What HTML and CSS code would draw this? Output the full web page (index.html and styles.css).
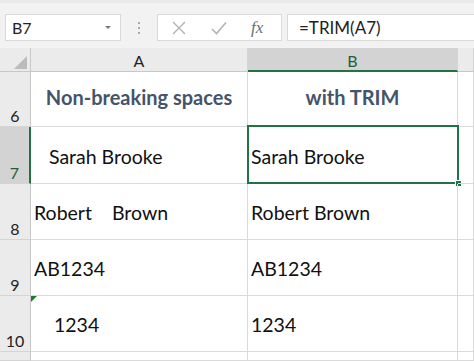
FILE: index.html
```html
<!DOCTYPE html>
<html lang="en">
<head>
    <meta charset="UTF-8">
    <title>TRIM non-breaking spaces</title>
    <link rel="stylesheet" href="styles.css">
</head>
<body>
    <div class="toolbar">
        <div class="name-box">
            <span>B7</span>
            <span class="caret"></span>
        </div>
        <div class="grip"><i></i><i></i><i></i></div>
        <div class="fx-buttons">
            <svg class="btn-icon" width="14" height="14" viewBox="0 0 14 14"><path d="M1 1 L13 13 M13 1 L1 13" stroke="#b3b3b3" stroke-width="1.4" fill="none"/></svg>
            <svg class="btn-icon" width="16" height="14" viewBox="0 0 16 14"><path d="M1 8 L5.5 12.5 L15 1.5" stroke="#b3b3b3" stroke-width="1.6" fill="none"/></svg>
            <span class="fx">fx</span>
        </div>
        <div class="formula">=TRIM(A7)</div>
    </div>

    <div class="sheet">
        <div class="corner"><span class="corner-tri"></span></div>
        <div class="col-head">A</div>
        <div class="col-head active">B</div>
        <div class="col-head"></div>

        <div class="row-head">6</div>
        <div class="cell title">Non-breaking spaces</div>
        <div class="cell title">with TRIM</div>
        <div class="cell"></div>

        <div class="row-head active">7</div>
        <div class="cell">&nbsp;&nbsp;&nbsp;Sarah Brooke</div>
        <div class="cell selected">Sarah Brooke<span class="sel-box"></span><span class="handle"></span></div>
        <div class="cell"></div>

        <div class="row-head">8</div>
        <div class="cell">Robert&nbsp;&nbsp;&nbsp;&nbsp;Brown</div>
        <div class="cell">Robert Brown</div>
        <div class="cell"></div>

        <div class="row-head">9</div>
        <div class="cell">AB1234</div>
        <div class="cell">AB1234</div>
        <div class="cell"></div>

        <div class="row-head">10</div>
        <div class="cell">&nbsp;&nbsp;&nbsp;&nbsp;1234<span class="flag"></span></div>
        <div class="cell">1234</div>
        <div class="cell"></div>

        <div class="row-head"></div>
        <div class="cell"></div>
        <div class="cell"></div>
        <div class="cell"></div>
    </div>
</body>
</html>
```

FILE: styles.css
```css
body {
    margin: 0;
    width: 474px;
    height: 361px;
    overflow: hidden;
    background: #ffffff;
    font-family: "Lato", "Open Sans", sans-serif;
    color: #111111;
}

/* formula bar */
.toolbar {
    height: 48px;
    box-sizing: border-box;
    background: #f2f2f2;
    border-top: 3px solid #e9e9e9;
    display: flex;
    align-items: flex-start;
    padding-top: 11px;
    padding-left: 5px;
}

.name-box {
    width: 116px;
    height: 27px;
    box-sizing: border-box;
    background: #ffffff;
    border: 1px solid #dadada;
    display: flex;
    align-items: center;
    justify-content: space-between;
    padding: 0 9px 0 6px;
    font-size: 16px;
    color: #222222;
}

.caret {
    width: 0;
    height: 0;
    border-left: 3px solid transparent;
    border-right: 3px solid transparent;
    border-top: 3px solid #7a7a7a;
}

.grip {
    width: 36px;
    height: 27px;
    display: flex;
    flex-direction: column;
    align-items: center;
    justify-content: center;
    gap: 3px;
}

.grip i {
    width: 2px;
    height: 2px;
    background: #a8a8a8;
}

.fx-buttons {
    width: 125px;
    height: 27px;
    box-sizing: border-box;
    background: #ffffff;
    border: 1px solid #dadada;
    display: flex;
    align-items: center;
    padding-left: 14px;
    gap: 25px;
}

.fx {
    font-family: "Liberation Serif", serif;
    font-style: italic;
    font-size: 17px;
    color: #6d6d6d;
    margin-left: -1px;
}

.formula {
    flex: 1;
    height: 27px;
    box-sizing: border-box;
    margin-left: 5px;
    background: #ffffff;
    border: 1px solid #dadada;
    border-right: none;
    padding-left: 11px;
    font-size: 17px;
    line-height: 25px;
    color: #222222;
}

/* grid */
.sheet {
    display: grid;
    grid-template-columns: 31px 217px 210px 1fr;
    grid-template-rows: 24px 55px 57px 56px 56px 56px 1fr;
    height: 313px;
}

.corner {
    background: #ebebeb;
    border-right: 1px solid #c8c8c8;
    border-bottom: 1px solid #c8c8c8;
    box-sizing: border-box;
    display: flex;
    align-items: flex-end;
    justify-content: flex-end;
    padding: 0 3px 2px 0;
}

.corner-tri {
    width: 0;
    height: 0;
    border-left: 13px solid transparent;
    border-bottom: 13px solid #bcbcbc;
}

.col-head {
    background: #ebebeb;
    border-right: 1px solid #d4d4d4;
    border-bottom: 1px solid #c8c8c8;
    box-sizing: border-box;
    display: flex;
    align-items: center;
    justify-content: center;
    font-size: 16px;
    color: #222222;
    padding-top: 2px;
}

.col-head.active {
    background: #d3d3d3;
    border-bottom: 2px solid #217346;
    color: #215f3b;
}

.row-head {
    background: #ebebeb;
    border-right: 1px solid #c8c8c8;
    border-bottom: 1px solid #d4d4d4;
    box-sizing: border-box;
    display: flex;
    align-items: flex-end;
    justify-content: center;
    font-size: 16px;
    color: #222222;
    padding-bottom: 1px;
}

.row-head.active {
    background: #d3d3d3;
    border-right: 2px solid #217346;
    color: #215f3b;
}

.cell {
    position: relative;
    border-right: 1px solid #dadada;
    border-bottom: 1px solid #dadada;
    box-sizing: border-box;
    display: flex;
    align-items: center;
    padding: 2px 0 0 3px;
    font-size: 19.5px;
    white-space: pre;
}

.cell.title {
    justify-content: center;
    font-size: 20px;
    font-weight: bold;
    color: #44546a;
    padding-left: 0;
    padding-bottom: 6px;
}

.sel-box {
    position: absolute;
    left: -1px;
    top: -2px;
    right: -2px;
    bottom: -1px;
    border: 2px solid #217346;
}

.handle {
    position: absolute;
    right: -5px;
    bottom: -4px;
    width: 5px;
    height: 5px;
    background: #217346;
    border: 1px solid #ffffff;
}

.flag {
    position: absolute;
    left: 0;
    top: 0;
    width: 0;
    height: 0;
    border-top: 6px solid #1e7a31;
    border-right: 6px solid transparent;
}
```
